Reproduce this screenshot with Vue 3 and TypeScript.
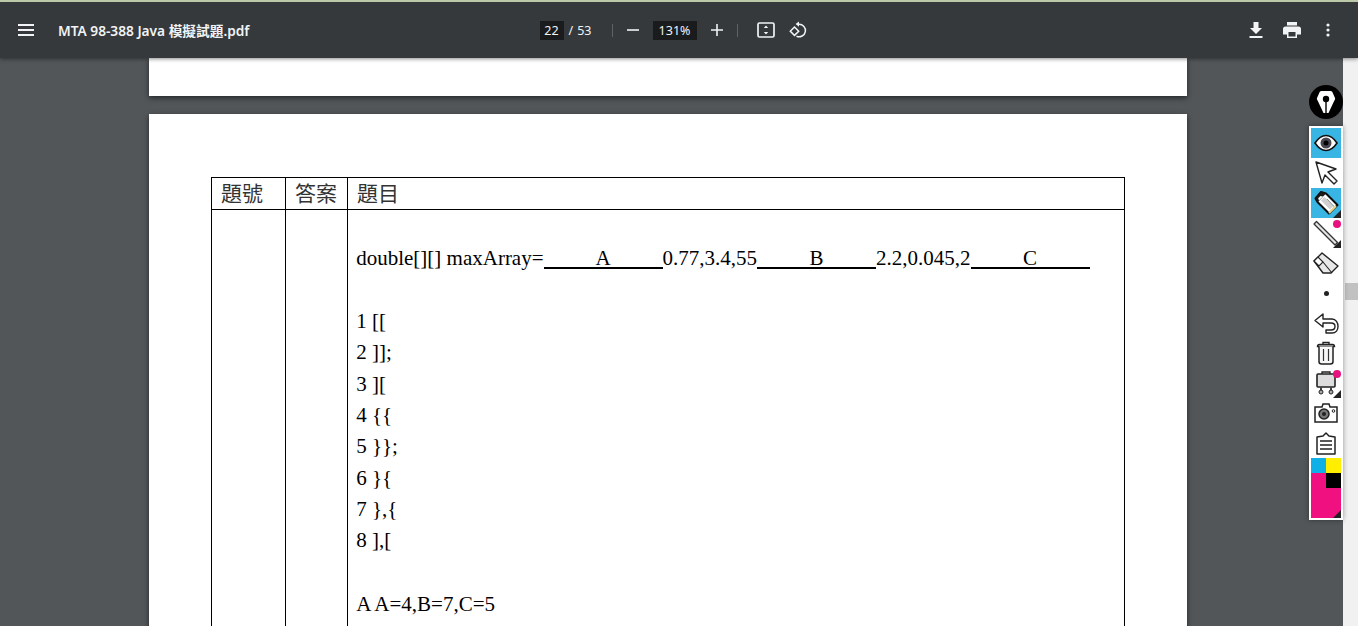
<script setup lang="ts">
const options: string[] = ['1 [[', '2 ]];', '3 ][', '4 {{', '5 }};', '6 }{', '7 },{', '8 ],[']
</script>

<template>
  <div class="app">
    <header class="toolbar">
      <div class="left">
        <svg class="menu" width="18" height="14" viewBox="0 0 18 14"><path d="M1 2h16M1 7h16M1 12h16" stroke="#f1f3f4" stroke-width="2" /></svg>
        <span class="title">MTA 98-388 Java 模擬試題.pdf</span>
      </div>
      <div class="center">
        <span class="field page-field">22</span>
        <span class="count"><i>/</i>53</span>
        <span class="sep"></span>
        <svg class="zoom-out" width="12" height="12" viewBox="0 0 12 12"><path d="M0 6h12" stroke="#f1f3f4" stroke-width="1.6" /></svg>
        <span class="field zoom-field">131%</span>
        <svg class="zoom-in" width="12" height="12" viewBox="0 0 12 12"><path d="M0 6h12M6 0v12" stroke="#f1f3f4" stroke-width="1.6" /></svg>
        <span class="sep sep2"></span>
        <svg class="fit" width="18" height="16" viewBox="0 0 18 16"><rect x="1" y="1" width="16" height="14" rx="1.5" fill="none" stroke="#f1f3f4" stroke-width="1.7" /><path d="M9 3.5l2.2 2.6H6.8zM9 12.5l2.2-2.6H6.8z" fill="#f1f3f4" /></svg>
        <svg class="rotate" width="18" height="18" viewBox="0 0 18 18"><path d="M9.5 3.2a6.3 6.3 0 1 1-2 12" fill="none" stroke="#f1f3f4" stroke-width="1.5" /><path d="M10 0.4v5.4L6.6 3.1z" fill="#f1f3f4" /><path d="M5.5 6l4.2 4.2-4.2 4.2-4.2-4.2z" fill="none" stroke="#f1f3f4" stroke-width="1.5" /></svg>
      </div>
      <div class="right">
        <svg width="14" height="16" viewBox="0 0 14 16"><path d="M4.5 0h5v6H13L7 12 1 6h3.500zM0.500 14h13v2H0.500z" fill="#f1f3f4" /></svg>
        <svg width="18" height="16" viewBox="0 0 18 16"><path d="M4 0h10v3.500H4zM2.500 4.500h13A2.500 2.500 0 0 1 18 7v5.500h-4V16H4v-3.500H0V7a2.500 2.500 0 0 1 2.500-2.500z" fill="#f1f3f4" /><rect x="5.500" y="10" width="7" height="4.500" fill="#35393c" /></svg>
        <svg class="more" width="4" height="14" viewBox="0 0 4 14"><circle cx="2" cy="2" r="1.600" fill="#f1f3f4" /><circle cx="2" cy="7" r="1.600" fill="#f1f3f4" /><circle cx="2" cy="12" r="1.600" fill="#f1f3f4" /></svg>
      </div>
    </header>

    <main class="viewer">
      <div class="pages">
        <div class="page page-prev"></div>
        <div class="page page-current">
          <div class="table">
            <div class="cell head c1">題號</div>
            <div class="cell head c2">答案</div>
            <div class="cell head c3">題目</div>
            <div class="cell body c1"></div>
            <div class="cell body c2"></div>
            <div class="cell body c3">
              <div class="line first">double[][] maxArray=<span class="blank">A</span>0.77,3.4,55<span class="blank">B</span>2.2,0.045,2<span class="blank">C</span></div>
              <div class="options">
                <div v-for="o in options" :key="o" class="line">{{ o }}</div>
              </div>
              <div class="line answer">A A=4,B=7,C=5</div>
            </div>
          </div>
        </div>
      </div>
      <div class="scrollbar"><div class="thumb"></div></div>
    </main>

    <aside class="pen-badge">
      <svg width="34" height="34" viewBox="0 0 34 34"><circle cx="17" cy="17" r="17" fill="#000" /><path d="M12.500 6h9c1.500 0 2 1 2.500 2.500L26 13c.3 1 0 1.800-.6 2.600L19.500 28h-5L8.600 15.600C8 14.800 7.700 14 8 13l2-4.500C10.500 7 11 6 12.500 6z" fill="#fff" /><circle cx="17" cy="14" r="3.200" fill="#000" /><path d="M16.300 15h1.400v13h-1.400z" fill="#000" /></svg>
    </aside>
    <aside class="tools">
      <div class="tool on">
        <svg width="26" height="22" viewBox="0 0 26 22"><path d="M2 11C6 5 10 3.500 13 3.500S20 5 24 11c-4 6-8 7.500-11 7.500S6 17 2 11z" fill="#fff" stroke="#111" stroke-width="1.600" /><circle cx="13" cy="11" r="5.500" fill="#4a4650" /><circle cx="13" cy="11" r="2.500" fill="#000" /></svg>
      </div>
      <div class="tool">
        <svg width="26" height="26" viewBox="0 0 26 26"><path d="M3 2l20 7-8 3 9 9-3 3-9-9-3 8z" fill="#fff" stroke="#222" stroke-width="1.400" stroke-linejoin="round" /></svg>
      </div>
      <div class="tool on corner">
        <svg width="26" height="26" viewBox="0 0 26 26"><path d="M2.500 8.500L8 2l5 1.500L24.500 15 16 23.500 4.500 12z" fill="#fff" stroke="#0d0d0d" stroke-width="2" stroke-linejoin="round" /><path d="M8 2l5 1.500-8 8.500-2.500-3.500z" fill="#1a1a1a" /><path d="M7.500 6l2.500.5-4 4-.8-2.300z" fill="#fff" /><path d="M11.500 7l9 9-3.500 3.500-9-9z" fill="#d0d0d0" /><path d="M14 9l7.500 8" stroke="#8c8c8c" stroke-width="1" /><path d="M23 16l-7 7" stroke="#f2d68a" stroke-width="2" /></svg>
      </div>
      <div class="tool corner">
        <i class="dot"></i>
        <svg width="26" height="26" viewBox="0 0 26 26"><path d="M3.500 1.500l21 21-2.500 2.500-21-21z" fill="#e4e4e4" stroke="#333" stroke-width="1.300" stroke-linejoin="round" /></svg>
      </div>
      <div class="tool">
        <svg width="28" height="26" viewBox="0 0 28 26"><path d="M2 11l8-8 16 13-7 7-8 0z" fill="#e8e8e8" stroke="#222" stroke-width="1.400" stroke-linejoin="round" /><path d="M2 11l4-4 5 5-4 4z" fill="#fff" stroke="#222" stroke-width="1.100" /><path d="M11 12l9 11" stroke="#222" stroke-width="1.100" /></svg>
      </div>
      <div class="tool"><span class="size"></span></div>
      <div class="tool">
        <svg width="26" height="24" viewBox="0 0 26 24"><path d="M10 3L2 9.500l8 6.500v-4h8c3 0 4 1.500 4 3.500s-1 3.500-4 3.500h-5v3h6c4 0 6-3 6-6.500S23 8 19 8h-9z" fill="#fff" stroke="#222" stroke-width="1.400" stroke-linejoin="round" /></svg>
      </div>
      <div class="tool">
        <svg width="20" height="24" viewBox="0 0 20 24"><path d="M1.500 5.500c0-1.500.5-2 2-2h13c1.500 0 2 .5 2 2z" fill="#f4f4f4" stroke="#222" stroke-width="1.400" /><path d="M7 3.500V1.500h6v2" fill="none" stroke="#222" stroke-width="1.400" /><path d="M3 5.500v15c0 1.500 1 2.500 2.500 2.500h9c1.500 0 2.500-1 2.500-2.500v-15" fill="#f8f8f8" stroke="#222" stroke-width="1.500" /><path d="M7.500 8v12M12.500 8v12" stroke="#333" stroke-width="1.200" /></svg>
      </div>
      <div class="tool corner">
        <i class="dot"></i>
        <svg width="22" height="24" viewBox="0 0 22 24"><path d="M7 3V1h8v2" fill="none" stroke="#222" stroke-width="1.300" /><rect x="2" y="3" width="18" height="13" rx="1" fill="#ddd" stroke="#222" stroke-width="1.600" /><path d="M6 16v4M16 16v4" stroke="#444" stroke-width="2" /><circle cx="6" cy="21" r="2" fill="#aaa" stroke="#222" /><circle cx="16" cy="21" r="2" fill="#aaa" stroke="#222" /></svg>
      </div>
      <div class="tool">
        <svg width="24" height="20" viewBox="0 0 24 20"><path d="M1 4h7l1-3h6l1 3h7v15H1z" fill="#fff" stroke="#222" stroke-width="1.500" /><circle cx="10" cy="11" r="5" fill="#777" stroke="#222" stroke-width="1.500" /><circle cx="10" cy="11" r="2" fill="#222" /><circle cx="19.500" cy="8" r="1.300" fill="none" stroke="#222" /></svg>
      </div>
      <div class="tool">
        <svg width="20" height="24" viewBox="0 0 20 24"><path d="M1 6l6-1 3-3 3 3 6 1v17H1z" fill="#fff" stroke="#222" stroke-width="1.500" stroke-linejoin="round" /><path d="M4 10h12M4 14h12M4 18h12" stroke="#222" stroke-width="1.500" /></svg>
      </div>
      <div class="swatches">
        <span class="cyan"></span>
        <span class="yellow"></span>
        <span class="magenta"></span>
        <span class="black"></span>
        <span class="magenta tail"></span>
      </div>
    </aside>
  </div>
</template>

<style>
html, body { margin: 0; overflow: hidden; }
</style>

<style scoped>
.app {
  position: relative;
  width: 1358px;
  height: 626px;
  overflow: hidden;
  display: flex;
  flex-direction: column;
  background: #525659;
}
.toolbar {
  position: relative;
  z-index: 2;
  height: 56px;
  flex: none;
  border-top: 2px solid #bcc9a8;
  background: #35393c;
  box-shadow: 0 1px 4px rgba(0, 0, 0, 0.45);
  color: #f1f3f4;
  font-family: "Noto Sans", "Noto Sans CJK TC", sans-serif;
  display: grid;
  grid-template-columns: 1fr auto 1fr;
  align-items: center;
}
.left { display: flex; align-items: center; padding-left: 17px; }
.menu { margin-right: 23px; }
.title { font-size: 13.7px; font-weight: 600; white-space: nowrap; }
.center { display: flex; align-items: center; font-size: 12.5px; padding-right: 12px; }
.field { background: #1a1b1d; height: 19px; line-height: 19px; text-align: center; }
.page-field { width: 24px; }
.count { margin-left: 5px; width: 32px; }
.count i { font-style: normal; margin-right: 4px; }
.sep { width: 1px; height: 13px; background: #5f6368; margin-left: 11px; }
.zoom-out { margin-left: 14px; }
.zoom-field { width: 44px; margin-left: 14px; }
.zoom-in { margin-left: 14px; }
.sep2 { margin-left: 14px; }
.fit { margin-left: 19px; }
.rotate { margin-left: 14px; }
.right { display: flex; align-items: center; justify-content: flex-end; gap: 20px; padding-right: 28px; }
.more { margin-left: 5px; }

.viewer { flex: 1; min-height: 0; display: flex; overflow: hidden; }
.pages {
  flex: 1;
  display: flex;
  flex-direction: column;
  align-items: flex-start;
  padding-left: 149px;
  gap: 18px;
}
.page {
  width: 1038px;
  background: #fff;
  flex: none;
  box-shadow: 0 2px 5px rgba(0, 0, 0, 0.55);
}
.page-prev { height: 38px; }
.page-current { height: 600px; padding: 63px 0 0 62px; box-sizing: border-box; }
.table {
  width: 914px;
  display: grid;
  grid-template-columns: 74px 62px 777px;
  grid-template-rows: 32px 480px;
  border-top: 1px solid #000;
  border-left: 1px solid #000;
  box-sizing: border-box;
  color: #000;
}
.cell { border-right: 1px solid #000; border-bottom: 1px solid #000; box-sizing: border-box; }
.head {
  font-family: "Noto Sans CJK TC", sans-serif;
  font-weight: 400;
  font-size: 21px;
  line-height: 29px;
  padding-left: 9px;
  color: #333;
}
.body.c3 { padding: 33px 0 0 8.200px; font-family: "Liberation Serif", serif; font-size: 21px; }
.line { height: 31.350px; line-height: 31.350px; white-space: nowrap; }
.first { display: flex; }
.blank {
  display: inline-block;
  width: 119px;
  height: 24px;
  line-height: 31.350px;
  text-align: center;
  border-bottom: 2px solid #000;
}
.options { margin-top: 31.700px; }
.answer { margin-top: 32px; }
.scrollbar { flex: none; width: 15px; background: #f1f1f1; }
.thumb { height: 17px; margin: 225px 0 0 2px; background: #c1c1c1; }

.pen-badge { position: absolute; left: 1309px; top: 85px; width: 34px; height: 34px; z-index: 3; line-height: 0; }
.tools {
  position: absolute;
  left: 1309px;
  top: 126px;
  width: 34px;
  height: 394px;
  padding: 2px;
  box-sizing: border-box;
  background: #fff;
  box-shadow: 0 0 5px rgba(0, 0, 0, 0.4);
  z-index: 3;
}
.tool { position: relative; width: 30px; height: 30px; display: flex; align-items: center; justify-content: center; }
.tool.on { background: #39b5e3; }
.corner::after {
  content: "";
  position: absolute;
  right: 0;
  bottom: 0;
  width: 0;
  height: 0;
  border-left: 8px solid transparent;
  border-bottom: 8px solid #222;
}
.dot { position: absolute; right: 0; top: 2px; width: 8px; height: 8px; border-radius: 50%; background: #e6127e; z-index: 1; }
.size { width: 5px; height: 5px; border-radius: 50%; background: #222; }
.swatches {
  position: relative;
  display: grid;
  grid-template-columns: 15px 15px;
  grid-template-rows: 15px 15px 30px;
  width: 30px;
}
.cyan { background: #0fb0e8; }
.yellow { background: #ffee00; }
.magenta { background: #f0107f; }
.black { background: #000; }
.tail { grid-column: 1 / 3; position: relative; }
.tail::after {
  content: "";
  position: absolute;
  right: 0;
  bottom: 0;
  border-left: 8px solid transparent;
  border-bottom: 8px solid #222;
}
</style>
